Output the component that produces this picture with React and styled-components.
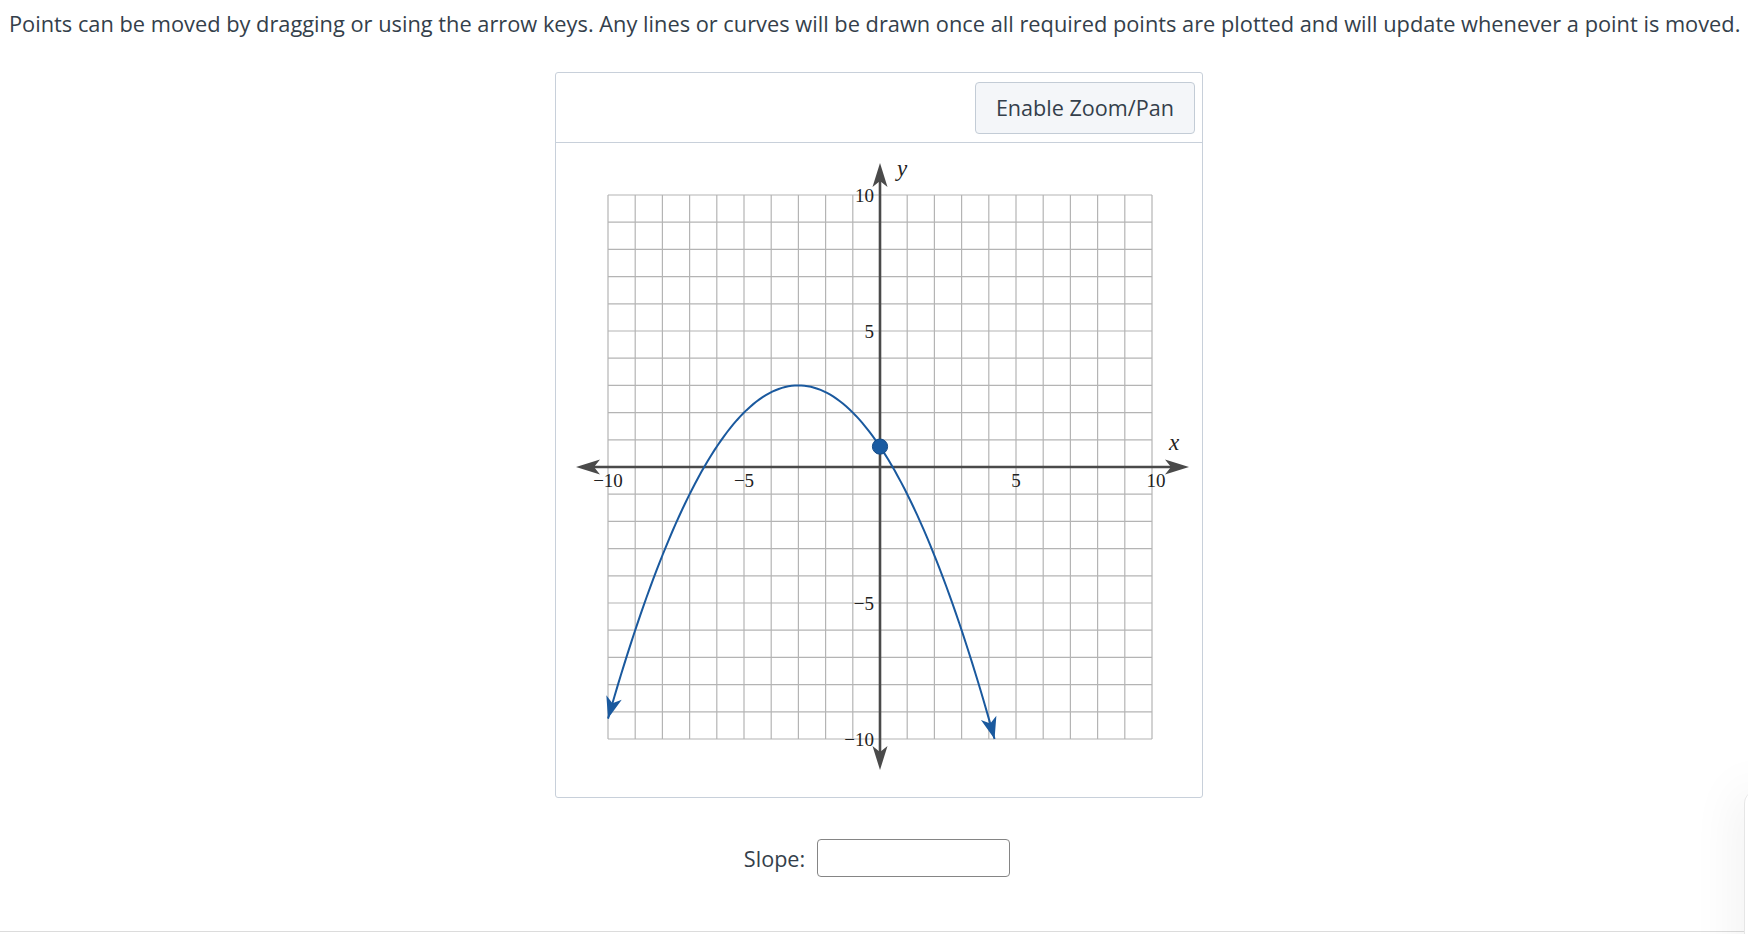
import styled, { createGlobalStyle } from "styled-components";

const GlobalStyle = createGlobalStyle`
  html, body {
    margin: 0;
    padding: 0;
    background: #fff;
  }
  body {
    font-family: "Open Sans", "Noto Sans", sans-serif;
    color: #343f4b;
    overflow: hidden;
  }
`;

// graph geometry (svg px)
const UNIT = 27.2;
const OX = 324;
const OY = 324;
const SVG_W = 646;
const SVG_H = 654;

const sx = (x) => OX + x * UNIT;
const sy = (y) => OY - y * UNIT;

const f = (x) => -0.25 * (x + 3) * (x + 3) + 3;

function dart(tipX, tipY, dx, dy, len, half, notch) {
  const m = Math.hypot(dx, dy);
  const ux = dx / m;
  const uy = dy / m;
  const px = -uy;
  const py = ux;
  const bx = tipX - ux * len;
  const by = tipY - uy * len;
  const nx = tipX - ux * notch;
  const ny = tipY - uy * notch;
  return [
    [tipX, tipY],
    [bx + px * half, by + py * half],
    [nx, ny],
    [bx - px * half, by - py * half],
  ]
    .map((p) => p.map((v) => v.toFixed(2)).join(","))
    .join(" ");
}

function curvePath() {
  const xEnd = -3 + Math.sqrt(52);
  const pts = [];
  const steps = 120;
  for (let i = 0; i <= steps; i++) {
    const x = -10 + ((xEnd + 10) * i) / steps;
    pts.push(`${sx(x).toFixed(2)},${sy(f(x)).toFixed(2)}`);
  }
  return { d: "M" + pts.join(" L"), xEnd };
}

export default function App() {
  const ticks = [];
  for (let i = -10; i <= 10; i++) ticks.push(i);
  const { d, xEnd } = curvePath();
  const axisColor = "#4a4a4a";
  const blue = "#1a599e";

  return (
    <>
      <GlobalStyle />
      <Instructions>
        Points can be moved by dragging or using the arrow keys. Any lines or
        curves will be drawn once all required points are plotted and will
        update whenever a point is moved.
      </Instructions>
      <Main>
        <Panel>
          <PanelHeader>
            <ZoomButton type="button">Enable Zoom/Pan</ZoomButton>
          </PanelHeader>
          <GraphArea>
            <svg width={SVG_W} height={SVG_H} viewBox={`0 0 ${SVG_W} ${SVG_H}`}>
              <g stroke="#b4b4b4" strokeWidth="1.2">
                {ticks.map((t) => (
                  <line key={"v" + t} x1={sx(t)} y1={sy(10)} x2={sx(t)} y2={sy(-10)} />
                ))}
                {ticks.map((t) => (
                  <line key={"h" + t} x1={sx(-10)} y1={sy(t)} x2={sx(10)} y2={sy(t)} />
                ))}
              </g>

              <g stroke={axisColor} strokeWidth="2.6">
                <line x1={OX - 290} y1={OY} x2={OX + 292} y2={OY} />
                <line x1={OX} y1={OY - 290} x2={OX} y2={OY + 290} />
              </g>
              <g fill={axisColor}>
                <polygon points={dart(OX - 304, OY, -1, 0, 24, 7.5, 18)} />
                <polygon points={dart(OX + 309, OY, 1, 0, 24, 7.5, 18)} />
                <polygon points={dart(OX, OY - 304, 0, -1, 24, 7.5, 18)} />
                <polygon points={dart(OX, OY + 303, 0, 1, 24, 7.5, 18)} />
              </g>

              <g fontFamily='"Liberation Serif", "DejaVu Serif", serif' fontSize="19" fill="#222">
                {[10, 5, -5, -10].map((v) => (
                  <text key={"yl" + v} x={OX - 6} y={sy(v) + 6.5} textAnchor="end">
                    {v < 0 ? "\u2212" + Math.abs(v) : v}
                  </text>
                ))}
                {[-10, -5, 5, 10].map((v) => (
                  <text key={"xl" + v} x={sx(v) + (v === 10 ? 4 : 0)} y={OY + 20} textAnchor="middle">
                    {v < 0 ? "\u2212" + Math.abs(v) : v}
                  </text>
                ))}
                <text x={OX + 22} y={OY - 291} fontSize="23" fontStyle="italic" textAnchor="middle">
                  y
                </text>
                <text x={OX + 294} y={OY - 17} fontSize="23" fontStyle="italic" textAnchor="middle">
                  x
                </text>
              </g>

              <path d={d} fill="none" stroke={blue} strokeWidth="2" />
              <polygon
                points={dart(sx(-10), sy(f(-10)), -1, 3.5, 22, 8, 16)}
                fill={blue}
              />
              <polygon
                points={dart(sx(xEnd), sy(f(xEnd)), 1, 0.5 * (xEnd + 3), 22, 8, 16)}
                fill={blue}
              />
              <circle cx={sx(0)} cy={sy(0.75)} r="7.6" fill="#1a5ba1" stroke="#134a86" strokeWidth="1" />
            </svg>
          </GraphArea>
        </Panel>

        <SlopeRow>
          <SlopeLabel htmlFor="slope">Slope:</SlopeLabel>
          <SlopeInput id="slope" type="text" />
        </SlopeRow>
      </Main>
      <Footer />
      <EdgeShadow />
    </>
  );
}

const Instructions = styled.p`
  margin: 0;
  padding: 8px 9px 0;
  font-size: 21.8px;
  line-height: 32.4px;
  white-space: nowrap;
  color: #343f4b;
`;

const Main = styled.main`
  display: flex;
  flex-direction: column;
  align-items: center;
  padding-left: 10px;
  padding-top: 32px;
`;

const Panel = styled.section`
  width: 646px;
  border: 1px solid #c8d0da;
  border-radius: 3px;
  background: #fff;
`;

const PanelHeader = styled.div`
  display: flex;
  justify-content: flex-end;
  align-items: center;
  height: 70px;
  padding: 0 7px;
  border-bottom: 1px solid #c8d0da;
  box-sizing: border-box;
`;

const ZoomButton = styled.button`
  height: 52px;
  padding: 0 20px;
  background: #f4f6f9;
  border: 1px solid #c3ccd6;
  border-radius: 4px;
  font-family: "Open Sans", "Noto Sans", sans-serif;
  font-size: 21.6px;
  color: #343f4b;
  cursor: pointer;
`;

const GraphArea = styled.div`
  display: flex;
  height: 654px;

  svg {
    display: block;
  }
`;

const SlopeRow = styled.div`
  display: flex;
  align-items: center;
  gap: 12px;
  margin-top: 41px;
  margin-right: 4px;
`;

const SlopeLabel = styled.label`
  font-size: 21.6px;
  color: #343f4b;
`;

const SlopeInput = styled.input`
  width: 193px;
  height: 38px;
  box-sizing: border-box;
  border: 1.4px solid #858585;
  border-radius: 4px;
  font-family: "Open Sans", sans-serif;
  font-size: 20px;
  padding: 0 8px;
  outline: none;
`;

const Footer = styled.div`
  margin-top: 54px;
  border-top: 1px solid #dcdcdc;
`;

const EdgeShadow = styled.div`
  position: fixed;
  right: -18px;
  top: 790px;
  width: 21px;
  height: 200px;
  background: #fff;
  border-radius: 14px 0 0 0;
  box-shadow: 0 0 50px rgba(0, 0, 0, 0.1);
  border-left: 1px solid #e6e6e6;
`;
